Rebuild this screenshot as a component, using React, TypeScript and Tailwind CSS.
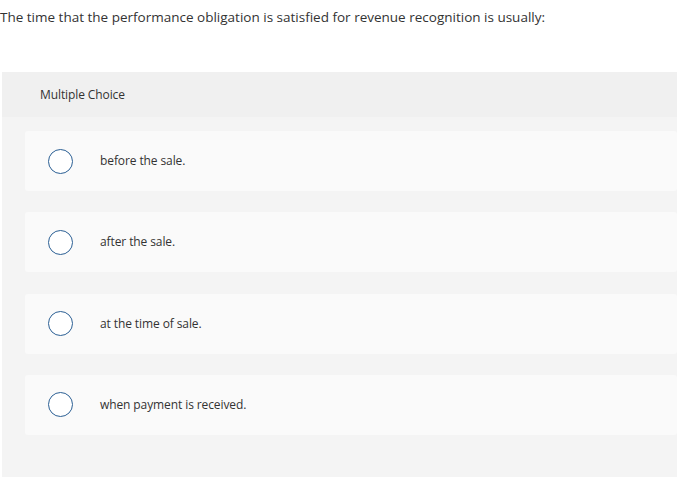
export default function App() {
  const options = [
    "before the sale.",
    "after the sale.",
    "at the time of sale.",
    "when payment is received.",
  ];
  return (
    <div className="w-[677px] h-[483px] bg-white text-[#333333]" style={{ fontFamily: '"Open Sans", "Liberation Sans", sans-serif' }}>
      <div className="h-[72px] pt-[8px] text-[13.5px] leading-[18px]">
        The time that the performance obligation is satisfied for revenue recognition is usually:
      </div>
      <div className="ml-[2px] h-[405px] bg-[#f4f4f4]">
        <div className="h-[45px] bg-[#f0f0f0] pl-[38px] flex items-center text-[12px] tracking-[-0.1px]">
          Multiple Choice
        </div>
        <div className="pt-[14px] pl-[23px] flex flex-col gap-[21.3px]">
          {options.map((o) => (
            <div key={o} className="h-[60px] bg-[#fafafa] rounded-[3px] flex items-center">
              <div className="ml-[23px] w-[25px] h-[25px] rounded-full border-[1.5px] border-[#2b5f94] bg-white" />
              <span className="ml-[27px] text-[12px] tracking-[-0.1px]">{o}</span>
            </div>
          ))}
        </div>
      </div>
    </div>
  );
}
